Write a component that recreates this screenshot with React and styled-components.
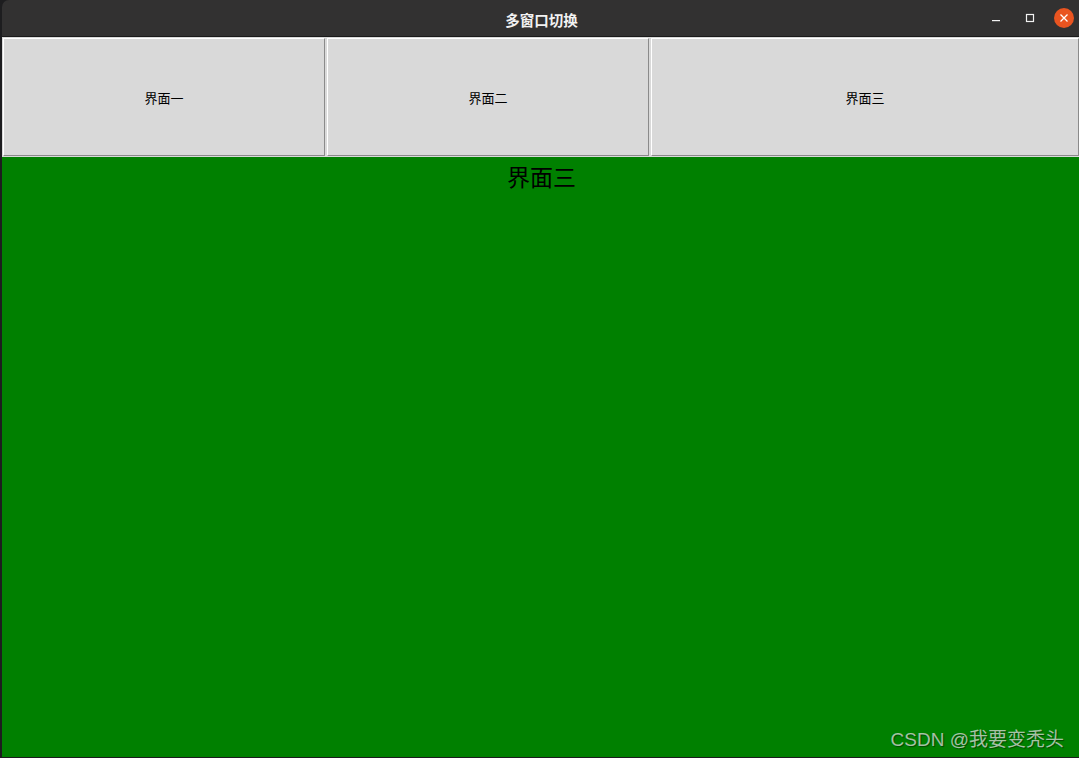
import React, {useState} from 'react'
import styled, {createGlobalStyle} from 'styled-components'

const FONT = `"Noto Sans CJK SC", "Noto Sans", "DejaVu Sans", sans-serif`;

const GlobalStyle = createGlobalStyle`
  html, body {
    margin: 0;
    padding: 0;
    height: 100%;
    background: #1d1d1f;
    overflow: hidden;
  }
  #root {
    height: 100%;
  }
`;

const PAGES = [
    {id: 1, name: '界面一', color: '#ff0000'},
    {id: 2, name: '界面二', color: '#0000ff'},
    {id: 3, name: '界面三', color: '#008000'},
];

const Window = styled.div`
  margin-left: 2px;
  height: 757px;
  display: flex;
  flex-direction: column;
  font-family: ${FONT};
`;

const TitleBar = styled.div`
  position: relative;
  height: 36px;
  border-bottom: 1px solid #1a1a1a;
  background: #323131;
  border-top-left-radius: 7px;
  display: flex;
  align-items: center;
  justify-content: center;
`;

const Title = styled.div`
  color: #f2f2f2;
  font-size: 14.5px;
  font-weight: 700;
  margin-left: 2px;
  margin-top: 2px;
`;

const Controls = styled.div`
  position: absolute;
  right: 5px;
  top: 8px;
  display: flex;
  align-items: center;
  gap: 14px;
`;

const CtlButton = styled.div`
  width: 20px;
  height: 20px;
  display: flex;
  align-items: center;
  justify-content: center;
  border-radius: 50%;
  background: ${p => p.close ? '#e95420' : 'transparent'};
`;

const ButtonRow = styled.div`
  height: 118px;
  padding: 1px 0 1px 1px;
  background: #d9d9d9;
  display: flex;
  gap: 2px;
`;

const TabButton = styled.button`
  flex: ${p => p.grow ? 1 : '0 0 322px'};
  height: 118px;
  margin: 0;
  padding: 0;
  background: #d9d9d9;
  border: 1px solid;
  border-color: #ffffff #8a8a8a #8a8a8a #ffffff;
  font-family: ${FONT};
  font-size: 13px;
  color: #000;
  cursor: pointer;
  &:active {
    border-color: #8a8a8a #ffffff #ffffff #8a8a8a;
  }
`;

const Panel = styled.div`
  position: relative;
  flex: 1;
  background: ${p => p.color};
  display: flex;
  flex-direction: column;
  align-items: center;
`;

const PanelLabel = styled.div`
  font-size: 23px;
  line-height: 34px;
  margin-top: 2px;
  color: #000;
  margin-left: 2px;
`;

const Watermark = styled.div`
  position: absolute;
  right: 15px;
  bottom: 6px;
  font-family: "Liberation Sans", "Noto Sans CJK SC", sans-serif;
  font-size: 19px;
  color: rgba(230, 230, 230, 0.72);
  text-shadow: 1px 1px 1px rgba(0, 0, 0, 0.45);
`;

const App = () => {
    const [current, setCurrent] = useState(3);
    const page = PAGES.find(p => p.id === current);

    return (
        <>
            <GlobalStyle/>
            <Window>
                <TitleBar>
                    <Title>多窗口切换</Title>
                    <Controls>
                        <CtlButton>
                            <svg width="10" height="10" viewBox="0 0 10 10">
                                <rect x="1" y="7" width="8" height="1.2" fill="#f2f2f2"/>
                            </svg>
                        </CtlButton>
                        <CtlButton>
                            <svg width="10" height="10" viewBox="0 0 10 10">
                                <rect x="1.5" y="1.5" width="7" height="7" fill="none" stroke="#f2f2f2" strokeWidth="1.2"/>
                            </svg>
                        </CtlButton>
                        <CtlButton close>
                            <svg width="10" height="10" viewBox="0 0 10 10">
                                <path d="M1.5 1.5 L8.5 8.5 M8.5 1.5 L1.5 8.5" stroke="#fff" strokeWidth="1.3"/>
                            </svg>
                        </CtlButton>
                    </Controls>
                </TitleBar>
                <ButtonRow>
                    {PAGES.map((p, i) =>
                        <TabButton key={p.id} grow={i === PAGES.length - 1} onClick={() => setCurrent(p.id)}>
                            {p.name}
                        </TabButton>
                    )}
                </ButtonRow>
                <Panel color={page.color}>
                    <PanelLabel>{page.name}</PanelLabel>
                    <Watermark>CSDN @我要变秃头</Watermark>
                </Panel>
            </Window>
        </>
    )
};

export default App;
